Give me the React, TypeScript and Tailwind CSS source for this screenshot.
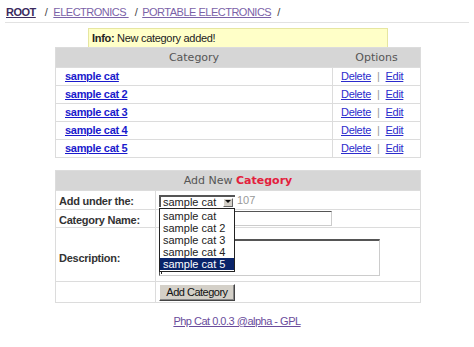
const cats = ["sample cat", "sample cat 2", "sample cat 3", "sample cat 4", "sample cat 5"]

function CategoryTable() {
  return (
    <div className="ml-[55px] w-[366px] border border-[#dcdcdc]">
      <div className="flex h-[19px] bg-[#d6d6d6] font-['DejaVu_Sans',Verdana,sans-serif] text-[11px] text-[#555]">
        <div className="flex w-[277px] items-center justify-center border-r border-[#d6d6d6]">Category</div>
        <div className="flex flex-1 items-center justify-center">Options</div>
      </div>
      {cats.map((c) => (
        <div key={c} className="flex h-[18px] border-t border-[#dcdcdc]">
          <div className="flex w-[277px] items-center border-r border-[#dcdcdc] pl-[9px]">
            <a href="#" className="font-bold tracking-[-0.3px] text-[#1a1acc] underline">
              {c}
            </a>
          </div>
          <div className="flex flex-1 items-center pl-[8px] tracking-[-0.3px]">
            <a href="#" className="text-[#2b2bcc] underline">Delete</a>
            <span className="mx-[6px] text-[#999]">|</span>
            <a href="#" className="text-[#2b2bcc] underline">Edit</a>
          </div>
        </div>
      ))}
    </div>
  )
}

function Dropdown() {
  return (
    <div className="absolute left-[3px] top-[17px] z-10 w-[76px] border border-[#222] bg-white py-px">
      {cats.map((c, i) => (
        <div
          key={c}
          className={
            i === 4
              ? "h-[12px] bg-[#0a246a] pl-[3px] leading-[12px] text-white"
              : "h-[12px] pl-[3px] leading-[12px] text-[#222]"
          }
        >
          {c}
        </div>
      ))}
    </div>
  )
}

function AddForm() {
  return (
    <div className="ml-[55px] mt-[12px] w-[366px] border border-[#dcdcdc]">
      <div className="flex h-[19px] items-center justify-center bg-[#d6d6d6] font-['DejaVu_Sans',Verdana,sans-serif] text-[11px] text-[#555]">
        Add New&nbsp;<span className="font-bold text-[#e3203c]">Category</span>
      </div>
      <div className="flex h-[19px] border-t border-[#dcdcdc]">
        <div className="flex w-[100px] items-center border-r border-[#dcdcdc] pl-[3px] pt-[3px] font-bold tracking-[-0.25px] text-[#333]">
          Add under the:
        </div>
        <div className="relative flex flex-1 items-start pl-[3px] pt-[4px]">
          <div className="flex h-[12px] w-[76px] items-center border-l-2 border-t-2 border-[#555] bg-white">
            <span className="flex-1 pl-[2px] leading-[10px] text-[#222]">sample cat</span>
            <span className="mr-[2px] flex h-[9px] w-[10px] items-center justify-center border border-t-white border-l-white border-r-[#666] border-b-[#666] bg-[#d4d0c8]">
              <svg width="6" height="4" viewBox="0 0 6 4">
                <path d="M0 0h6L3 3z" fill="#111" />
              </svg>
            </span>
          </div>
          <span className="ml-[2px] mt-[-1px] text-[#999]">107</span>
          <Dropdown />
        </div>
      </div>
      <div className="flex h-[18px] border-t border-[#dcdcdc]">
        <div className="flex w-[100px] items-center border-r border-[#dcdcdc] pl-[3px] pt-[3px] font-bold tracking-[-0.25px] text-[#333]">
          Category Name:
        </div>
        <div className="flex flex-1 items-center pl-[3px]">
          <div className="h-[15px] w-[173px] border border-[#ccc] border-t-[#555] border-l-[#555] bg-white" />
        </div>
      </div>
      <div className="flex h-[54px] border-t border-[#dcdcdc]">
        <div className="flex w-[100px] items-center border-r border-[#dcdcdc] pl-[3px] pt-[8px] font-bold tracking-[-0.25px] text-[#333]">
          Description:
        </div>
        <div className="flex flex-1 items-start pl-[3px] pt-[11px]">
          <div className="relative h-[37px] w-[221px] border border-[#ccc] border-t-2 border-t-[#555] border-l-[#555] bg-white">
            <div className="absolute bottom-[1px] left-[1px] h-[7px] w-px bg-[#222]" />
          </div>
        </div>
      </div>
      <div className="flex h-[21px] border-t border-[#dcdcdc]">
        <div className="w-[100px] border-r border-[#dcdcdc]" />
        <div className="flex flex-1 items-center pl-[3px]">
          <button className="flex h-[17px] w-[76px] items-center justify-center border border-t-white border-l-white border-r-[#444] border-b-[#444] bg-[#d4d0c8] tracking-[-0.5px] text-[#111] shadow-[inset_-1px_-1px_0_#888]">
            Add Category
          </button>
        </div>
      </div>
    </div>
  )
}

export default function App() {
  return (
    <div className="h-[347px] w-[474px] bg-white font-['Liberation_Sans',Arial,sans-serif] text-[11px] leading-[13px] text-black">
      <div className="flex h-[22px] items-start px-[6px] pt-[6px] tracking-[-0.5px]">
        <a href="#" className="font-bold text-[#3b2a5e] underline">ROOT</a>
        <span className="ml-[9px] text-[#444]">/</span>
        <a href="#" className="ml-[6px] text-[#7b62a8] underline">ELECTRONICS&nbsp;</a>
        <span className="ml-[6px] text-[#444]">/</span>
        <a href="#" className="ml-[5px] text-[#7b62a8] underline">PORTABLE ELECTRONICS</a>
        <span className="ml-[6px] text-[#444]">/</span>
      </div>
      <div className="mx-[5px] h-px bg-[#e2e2e2]" />
      <div className="ml-[88px] mt-[5px] flex h-[19px] w-[300px] items-center border border-b-0 border-[#e6e6a0] bg-[#ffffc8] pl-[3px] tracking-[-0.3px] text-[#222]">
        <b>Info:</b>&nbsp;New category added!
      </div>
      <CategoryTable />
      <AddForm />
      <div className="mt-[12px] text-center tracking-[-0.5px]">
        <a href="#" className="text-[#6a4c9c] underline">Php Cat 0.0.3 @alpha - GPL</a>
      </div>
    </div>
  )
}
